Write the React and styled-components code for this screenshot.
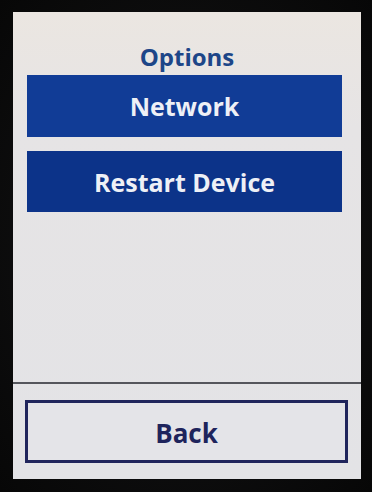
import React from "react";
import styled, { createGlobalStyle } from "styled-components";

const Global = createGlobalStyle`
  html, body { margin: 0; padding: 0; background: #0b0b0c; }
  body { width: 372px; height: 492px; overflow: hidden; font-family: "Open Sans", "Noto Sans", sans-serif; }
`;

const Bezel = styled.div`
  width: 372px;
  height: 492px;
  box-sizing: border-box;
  padding: 12px 11px 13px 13px;
  background: radial-gradient(ellipse at center, #161617 0%, #070707 100%);
  display: flex;
`;

const Screen = styled.div`
  flex: 1;
  display: flex;
  flex-direction: column;
  background: linear-gradient(180deg, #ebe6e1 0%, #e6e4e5 25%, #e3e3e6 100%);
`;

const Title = styled.h1`
  margin: 0;
  padding-top: 30px;
  margin-bottom: 3px;
  text-align: center;
  font-size: 24px;
  line-height: 30px;
  font-weight: 700;
  color: #1d4688;
`;

const Menu = styled.div`
  display: flex;
  flex-direction: column;
  gap: 14px;
  padding: 0 19px 0 14px;
`;

const MenuButton = styled.button`
  height: ${(p) => p.$h}px;
  border: none;
  margin: 0;
  padding: 0;
  background: ${(p) => p.$bg};
  color: #eef0f6;
  font-family: inherit;
  font-size: 25px;
  font-weight: 700;
  display: flex;
  align-items: center;
  justify-content: center;
`;

const Spacer = styled.div`
  flex: 1;
`;

const Divider = styled.div`
  height: 2px;
  background: #55565c;
`;

const Footer = styled.div`
  display: flex;
  flex-direction: column;
  padding: 16px 13px 16px 12px;
`;

const BackButton = styled.button`
  height: 63px;
  box-sizing: border-box;
  margin: 0;
  background: #e4e4e8;
  border: 3px solid #20255c;
  color: #1e245c;
  font-family: inherit;
  font-size: 26px;
  font-weight: 700;
  display: flex;
  align-items: center;
  justify-content: center;
  padding: 3px 0 0 0;
`;

export default function App() {
  return (
    <>
      <Global />
      <Bezel>
        <Screen>
          <Title>Options</Title>
          <Menu>
            <MenuButton $h={62} $bg="#113c96">Network</MenuButton>
            <MenuButton $h={61} $bg="#0c3389">Restart Device</MenuButton>
          </Menu>
          <Spacer />
          <Divider />
          <Footer>
            <BackButton>Back</BackButton>
          </Footer>
        </Screen>
      </Bezel>
    </>
  );
}
